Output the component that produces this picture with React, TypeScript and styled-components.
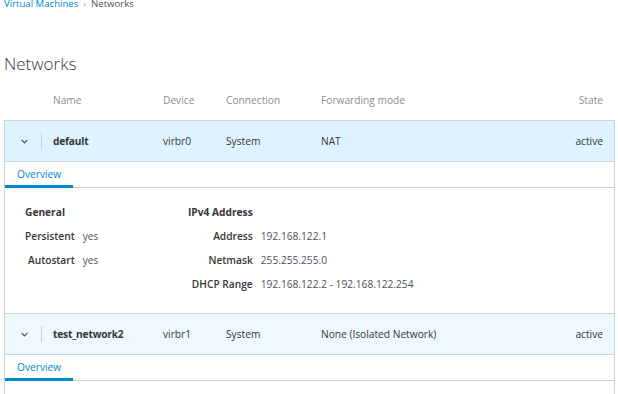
import { createGlobalStyle } from "styled-components";
import styled from "styled-components";

const GlobalStyle = createGlobalStyle`
  html, body {
    margin: 0;
    padding: 0;
    background: #fff;
    font-family: "Open Sans", "Liberation Sans", sans-serif;
    font-size: 10.2px;
    color: #363636;
    overflow: hidden;
  }
`;

const Page = styled.div`
  padding: 0 3px 0 4px;
`;

const Breadcrumb = styled.div`
  display: flex;
  align-items: center;
  gap: 5px;
  margin-top: -2px;
  line-height: 12px;
  font-size: 9.6px;
`;

const CrumbLink = styled.a`
  color: #0088ce;
  text-decoration: none;
`;

const CrumbSep = styled.span`
  color: #9c9c9c;
  font-size: 9px;
`;

const CrumbCurrent = styled.span`
  color: #4d5258;
`;

const Title = styled.h2`
  margin: 42px 0 0;
  font-size: 17px;
  font-weight: 300;
  line-height: 24px;
  color: #363636;
`;

const columns = "48px 110px 63px 95px 1fr auto";

const HeaderRow = styled.div`
  display: grid;
  grid-template-columns: ${columns};
  padding: 16px 11px 12px 0;
  border: 1px solid transparent;
  border-width: 0 1px;
  line-height: 16px;
  color: #8b8d8f;
`;

const HeaderCell = styled.span<{ $col: number; $right?: boolean }>`
  grid-column: ${({ $col }) => $col};
  justify-self: ${({ $right }) => ($right ? "end" : "start")};
`;

const List = styled.div`
  border: 1px solid #d1d1d1;
  border-bottom: none;
`;

const Item = styled.div`
  & + & {
    border-top: 1px solid #d1d1d1;
  }
`;

const ItemRow = styled.div<{ $bg: string }>`
  display: grid;
  grid-template-columns: ${columns};
  align-items: center;
  height: 40px;
  padding-right: 11px;
  background: ${({ $bg }) => $bg};
  border-bottom: 1px solid #c8d9e3;
`;

const Toggle = styled.div`
  display: flex;
  align-items: center;
  height: 100%;
`;

const Chevron = styled.svg`
  width: 7px;
  height: 5px;
  margin-left: 16px;
`;

const Divider = styled.span`
  width: 1px;
  height: 16px;
  background: #c9cdd0;
  margin-left: 13px;
`;

const NameCell = styled.span`
  font-weight: 700;
  color: #363636;
  letter-spacing: -0.2px;
`;

const Cell = styled.span<{ $right?: boolean }>`
  justify-self: ${({ $right }) => ($right ? "end" : "start")};
  color: #363636;
`;

const TabBar = styled.div`
  display: flex;
  height: 25px;
  border-bottom: 1px solid #d1d1d1;
`;

const Tab = styled.div<{ $active?: boolean }>`
  display: flex;
  align-items: center;
  box-sizing: border-box;
  height: 26px;
  min-width: 67px;
  padding: 1px 12px 0;
  margin-bottom: -1px;
  color: #0088ce;
  border-bottom: 3px solid ${({ $active }) => ($active ? "#0088ce" : "transparent")};
`;

const Details = styled.div`
  display: flex;
  padding: 12px 20px 17px 20px;
`;

const Group = styled.dl<{ $width?: number }>`
  display: grid;
  grid-template-columns: max-content max-content;
  justify-content: start;
  grid-auto-rows: 24px;
  align-items: center;
  column-gap: 8px;
  margin: 0;
  width: ${({ $width }) => ($width ? `${$width}px` : "auto")};
`;

const GroupTitle = styled.dt`
  grid-column: 1;
  font-weight: 700;
  color: #363636;
`;

const Label = styled.dt`
  grid-column: 1;
  justify-self: end;
  font-weight: 600;
  color: #363636;
`;

const Value = styled.dd`
  grid-column: 2;
  margin: 0;
  color: #4d5258;
`;

const Empty = styled.div`
  height: 20px;
`;

type Net = {
  name: string;
  device: string;
  connection: string;
  forwarding: string;
  state: string;
  bg: string;
  details?: boolean;
};

const networks: Net[] = [
  {
    name: "default",
    device: "virbr0",
    connection: "System",
    forwarding: "NAT",
    state: "active",
    bg: "#def3ff",
    details: true,
  },
  {
    name: "test_network2",
    device: "virbr1",
    connection: "System",
    forwarding: "None (Isolated Network)",
    state: "active",
    bg: "#edf8ff",
  },
];

function NetworkItem({ net }: { net: Net }) {
  return (
    <Item>
      <ItemRow $bg={net.bg}>
        <Toggle>
          <Chevron viewBox="0 0 7 5" fill="none" stroke="#4d5258" strokeWidth="1.2">
            <polyline points="0.6,0.8 3.5,3.8 6.4,0.8" />
          </Chevron>
          <Divider />
        </Toggle>
        <NameCell>{net.name}</NameCell>
        <Cell>{net.device}</Cell>
        <Cell>{net.connection}</Cell>
        <Cell>{net.forwarding}</Cell>
        <Cell $right>{net.state}</Cell>
      </ItemRow>
      <TabBar>
        <Tab $active>Overview</Tab>
      </TabBar>
      {net.details ? (
        <Details>
          <Group $width={163}>
            <GroupTitle>General</GroupTitle>
            <span />
            <Label>Persistent</Label>
            <Value>yes</Value>
            <Label>Autostart</Label>
            <Value>yes</Value>
          </Group>
          <Group>
            <GroupTitle>IPv4 Address</GroupTitle>
            <span />
            <Label>Address</Label>
            <Value>192.168.122.1</Value>
            <Label>Netmask</Label>
            <Value>255.255.255.0</Value>
            <Label>DHCP Range</Label>
            <Value>192.168.122.2 - 192.168.122.254</Value>
          </Group>
        </Details>
      ) : (
        <Empty />
      )}
    </Item>
  );
}

export default function App() {
  return (
    <>
      <GlobalStyle />
      <Page>
        <Breadcrumb>
          <CrumbLink href="#">Virtual Machines</CrumbLink>
          <CrumbSep>›</CrumbSep>
          <CrumbCurrent>Networks</CrumbCurrent>
        </Breadcrumb>
        <Title>Networks</Title>
        <HeaderRow>
          <HeaderCell $col={2}>Name</HeaderCell>
          <HeaderCell $col={3}>Device</HeaderCell>
          <HeaderCell $col={4}>Connection</HeaderCell>
          <HeaderCell $col={5}>Forwarding mode</HeaderCell>
          <HeaderCell $col={6} $right>State</HeaderCell>
        </HeaderRow>
        <List>
          {networks.map((n) => (
            <NetworkItem key={n.name} net={n} />
          ))}
        </List>
      </Page>
    </>
  );
}
